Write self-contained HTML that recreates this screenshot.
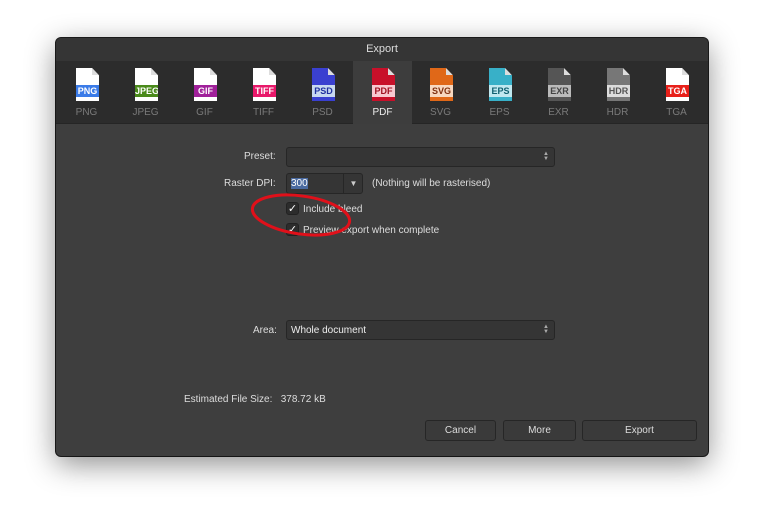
<!DOCTYPE html>
<html><head><style>
*{margin:0;padding:0;box-sizing:border-box}
body{width:764px;height:530px;background:#fff;position:relative;font-family:"Liberation Sans",sans-serif;overflow:hidden}
.win{position:absolute;left:56px;top:38px;width:652px;height:418px;background:#3e3e3e;border-radius:5px;box-shadow:0 8px 30px rgba(0,0,0,.45),0 0 0 1px #1e1e1e;overflow:hidden}
.title{position:absolute;left:0;top:0;width:100%;height:23px;background:#353535;color:#ddd;font-size:11px;text-align:center;line-height:23px}
.strip{position:absolute;left:0;top:23px;width:100%;height:63px;background:#2c2c2c;border-bottom:1px solid #252525}
.tab{position:absolute;top:0;width:59px;height:63px}
.tab.sel{background:#3d3d3d}
.ic{position:absolute;left:19px;top:7px;width:23px;height:33px;clip-path:polygon(0 0,70% 0,100% 22%,100% 100%,0 100%);box-shadow:0 0 3px #000}
.fold{position:absolute;right:0;top:0;width:7px;height:7px;background:#ddd;clip-path:polygon(0 0,100% 100%,0 100%)}
.band{position:absolute;left:0;top:17px;width:23px;height:12px;font-size:9px;font-weight:bold;text-align:center;line-height:12px}
.lab{position:absolute;left:0;top:46px;width:59px;text-align:center;font-size:10px;color:#7a7a7a}
.tab.sel .lab{color:#eee}
.t{position:absolute;color:#ddd;font-size:10px}
.dd{position:absolute;background:#353535;border:1px solid #262626;border-radius:3px;color:#eee;font-size:10px;padding-left:4px}
.cb{position:absolute;width:13px;height:13px;background:#2c2c2c;border:1px solid #222;border-radius:3px;color:#fff;font-size:11px;line-height:12px;text-align:center}
.btn{position:absolute;top:382px;height:21px;border:1px solid #262626;border-radius:3px;background:#3a3a3a;color:#ddd;font-size:10px;text-align:center;line-height:20px}
.arr{position:absolute;right:5px;top:4px;font-size:6px;line-height:5px;color:#aaa}
</style></head><body>
<div class="win">
<div class="title">Export</div>
<div class="strip">
<div class="tab" style="left:1px"><div class="ic" style="background:#fff"><div class="fold"></div><div class="band" style="background:#3a7be8;color:#fff">PNG</div></div><div class="lab">PNG</div></div>
<div class="tab" style="left:60px"><div class="ic" style="background:#fff"><div class="fold"></div><div class="band" style="background:#4a8a1a;color:#fff">JPEG</div></div><div class="lab">JPEG</div></div>
<div class="tab" style="left:119px"><div class="ic" style="background:#fff"><div class="fold"></div><div class="band" style="background:#a0209a;color:#fff">GIF</div></div><div class="lab">GIF</div></div>
<div class="tab" style="left:178px"><div class="ic" style="background:#fff"><div class="fold"></div><div class="band" style="background:#e8186a;color:#fff">TIFF</div></div><div class="lab">TIFF</div></div>
<div class="tab" style="left:237px"><div class="ic" style="background:#3a40d0"><div class="fold"></div><div class="band" style="background:#c8d8f0;color:#2030a0">PSD</div></div><div class="lab">PSD</div></div>
<div class="tab sel" style="left:297px"><div class="ic" style="background:#c8102a"><div class="fold"></div><div class="band" style="background:#f8c8d0;color:#a01020">PDF</div></div><div class="lab">PDF</div></div>
<div class="tab" style="left:355px"><div class="ic" style="background:#e06818"><div class="fold"></div><div class="band" style="background:#f8d8c0;color:#803010">SVG</div></div><div class="lab">SVG</div></div>
<div class="tab" style="left:414px"><div class="ic" style="background:#38b0c8"><div class="fold"></div><div class="band" style="background:#c0e8f0;color:#106070">EPS</div></div><div class="lab">EPS</div></div>
<div class="tab" style="left:473px"><div class="ic" style="background:#555"><div class="fold"></div><div class="band" style="background:#bbb;color:#444">EXR</div></div><div class="lab">EXR</div></div>
<div class="tab" style="left:532px"><div class="ic" style="background:#777"><div class="fold"></div><div class="band" style="background:#ddd;color:#555">HDR</div></div><div class="lab">HDR</div></div>
<div class="tab" style="left:591px"><div class="ic" style="background:#fff"><div class="fold"></div><div class="band" style="background:#e8201a;color:#fff">TGA</div></div><div class="lab">TGA</div></div>
</div>
<div class="t" style="left:188px;top:113px">Preset:</div>
<div class="dd" style="left:230px;top:109px;width:269px;height:20px"><div class="arr">▲<br>▼</div></div>
<div class="t" style="left:168px;top:140px">Raster DPI:</div>
<div class="dd" style="left:230px;top:135px;width:77px;height:21px;line-height:19px"><span style="background:#4a6aa0;color:#fff">300</span><span style="position:absolute;left:56px;top:0;height:19px;border-left:1px solid #262626;width:20px;text-align:center;color:#ccc;font-size:8px">▼</span></div>
<div class="t" style="left:316px;top:140px">(Nothing will be rasterised)</div>
<div class="cb" style="left:230px;top:164px">✓</div><div class="t" style="left:247px;top:166px">Include bleed</div>
<div class="cb" style="left:230px;top:185px">✓</div><div class="t" style="left:247px;top:187px">Preview export when complete</div>
<div class="t" style="left:197px;top:287px">Area:</div>
<div class="dd" style="left:230px;top:282px;width:269px;height:20px;line-height:19px">Whole document<div class="arr">▲<br>▼</div></div>
<div class="t" style="left:128px;top:356px">Estimated File Size:&nbsp;&nbsp; 378.72 kB</div>
<div class="btn" style="left:369px;width:71px">Cancel</div>
<div class="btn" style="left:447px;width:73px">More</div>
<div class="btn" style="left:526px;width:115px">Export</div>
</div>
<svg style="position:absolute;left:0;top:0" width="764" height="530"><ellipse cx="301" cy="215" rx="49" ry="19" transform="rotate(8 301 215)" fill="none" stroke="#e0101a" stroke-width="3"/></svg>
</body></html>
